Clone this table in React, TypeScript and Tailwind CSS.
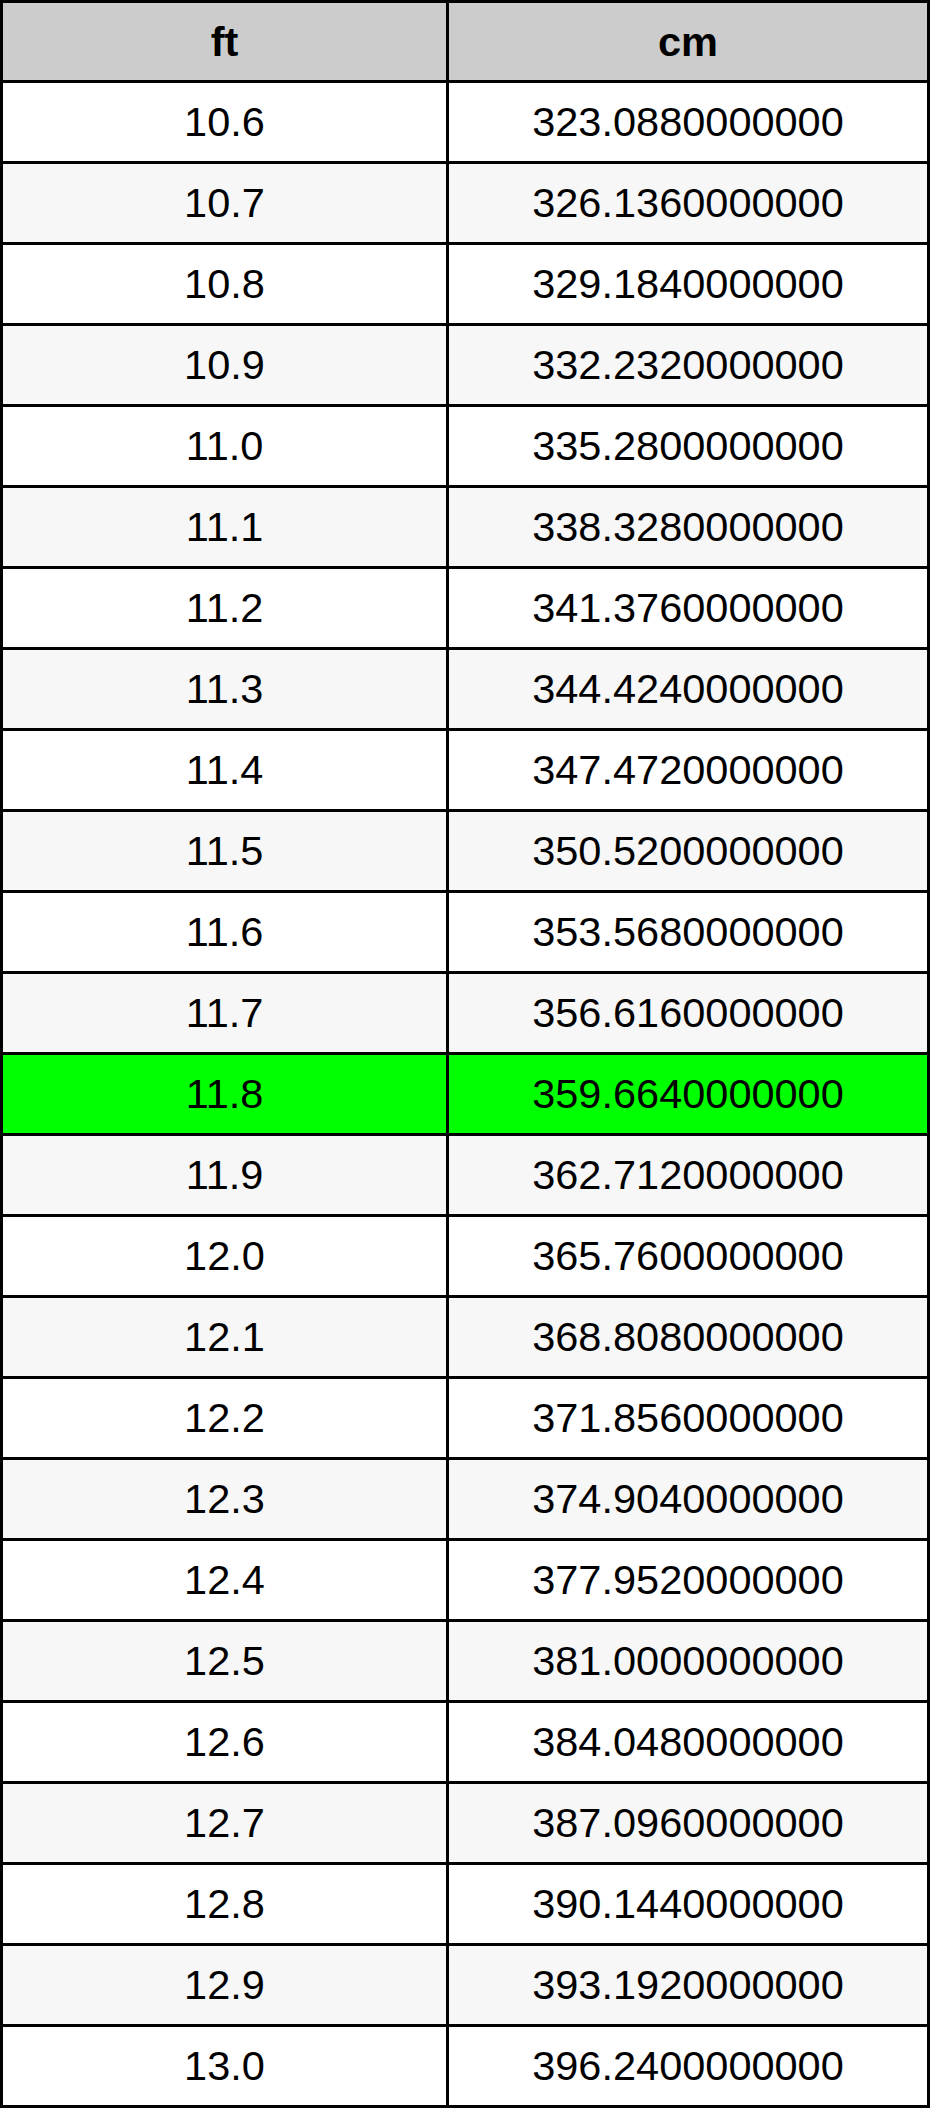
const rows: [string, string][] = [
  ["10.6", "323.0880000000"],
  ["10.7", "326.1360000000"],
  ["10.8", "329.1840000000"],
  ["10.9", "332.2320000000"],
  ["11.0", "335.2800000000"],
  ["11.1", "338.3280000000"],
  ["11.2", "341.3760000000"],
  ["11.3", "344.4240000000"],
  ["11.4", "347.4720000000"],
  ["11.5", "350.5200000000"],
  ["11.6", "353.5680000000"],
  ["11.7", "356.6160000000"],
  ["11.8", "359.6640000000"],
  ["11.9", "362.7120000000"],
  ["12.0", "365.7600000000"],
  ["12.1", "368.8080000000"],
  ["12.2", "371.8560000000"],
  ["12.3", "374.9040000000"],
  ["12.4", "377.9520000000"],
  ["12.5", "381.0000000000"],
  ["12.6", "384.0480000000"],
  ["12.7", "387.0960000000"],
  ["12.8", "390.1440000000"],
  ["12.9", "393.1920000000"],
  ["13.0", "396.2400000000"],
];

const HIGHLIGHT = "11.8";

export default function App() {
  return (
    <div className="w-[930px] bg-white font-['Liberation_Sans',Arial,sans-serif] text-[41.5px] leading-none text-black">
      <div className="border-[3px] border-black">
        <div className="flex h-[77px] bg-[#cccccc] font-bold">
          <div className="flex w-[446px] items-center justify-center border-r-[3px] border-black">ft</div>
          <div className="flex flex-1 items-center justify-center">cm</div>
        </div>
        {rows.map(([ft, cm], i) => {
          const bg = ft === HIGHLIGHT ? "bg-[#00ff00]" : i % 2 === 1 ? "bg-[#f7f7f7]" : "bg-white";
          return (
            <div key={ft} className={`flex h-[81px] border-t-[3px] border-black ${bg}`}>
              <div className="flex w-[446px] items-center justify-center border-r-[3px] border-black">{ft}</div>
              <div className="flex flex-1 items-center justify-center">{cm}</div>
            </div>
          );
        })}
      </div>
    </div>
  );
}
